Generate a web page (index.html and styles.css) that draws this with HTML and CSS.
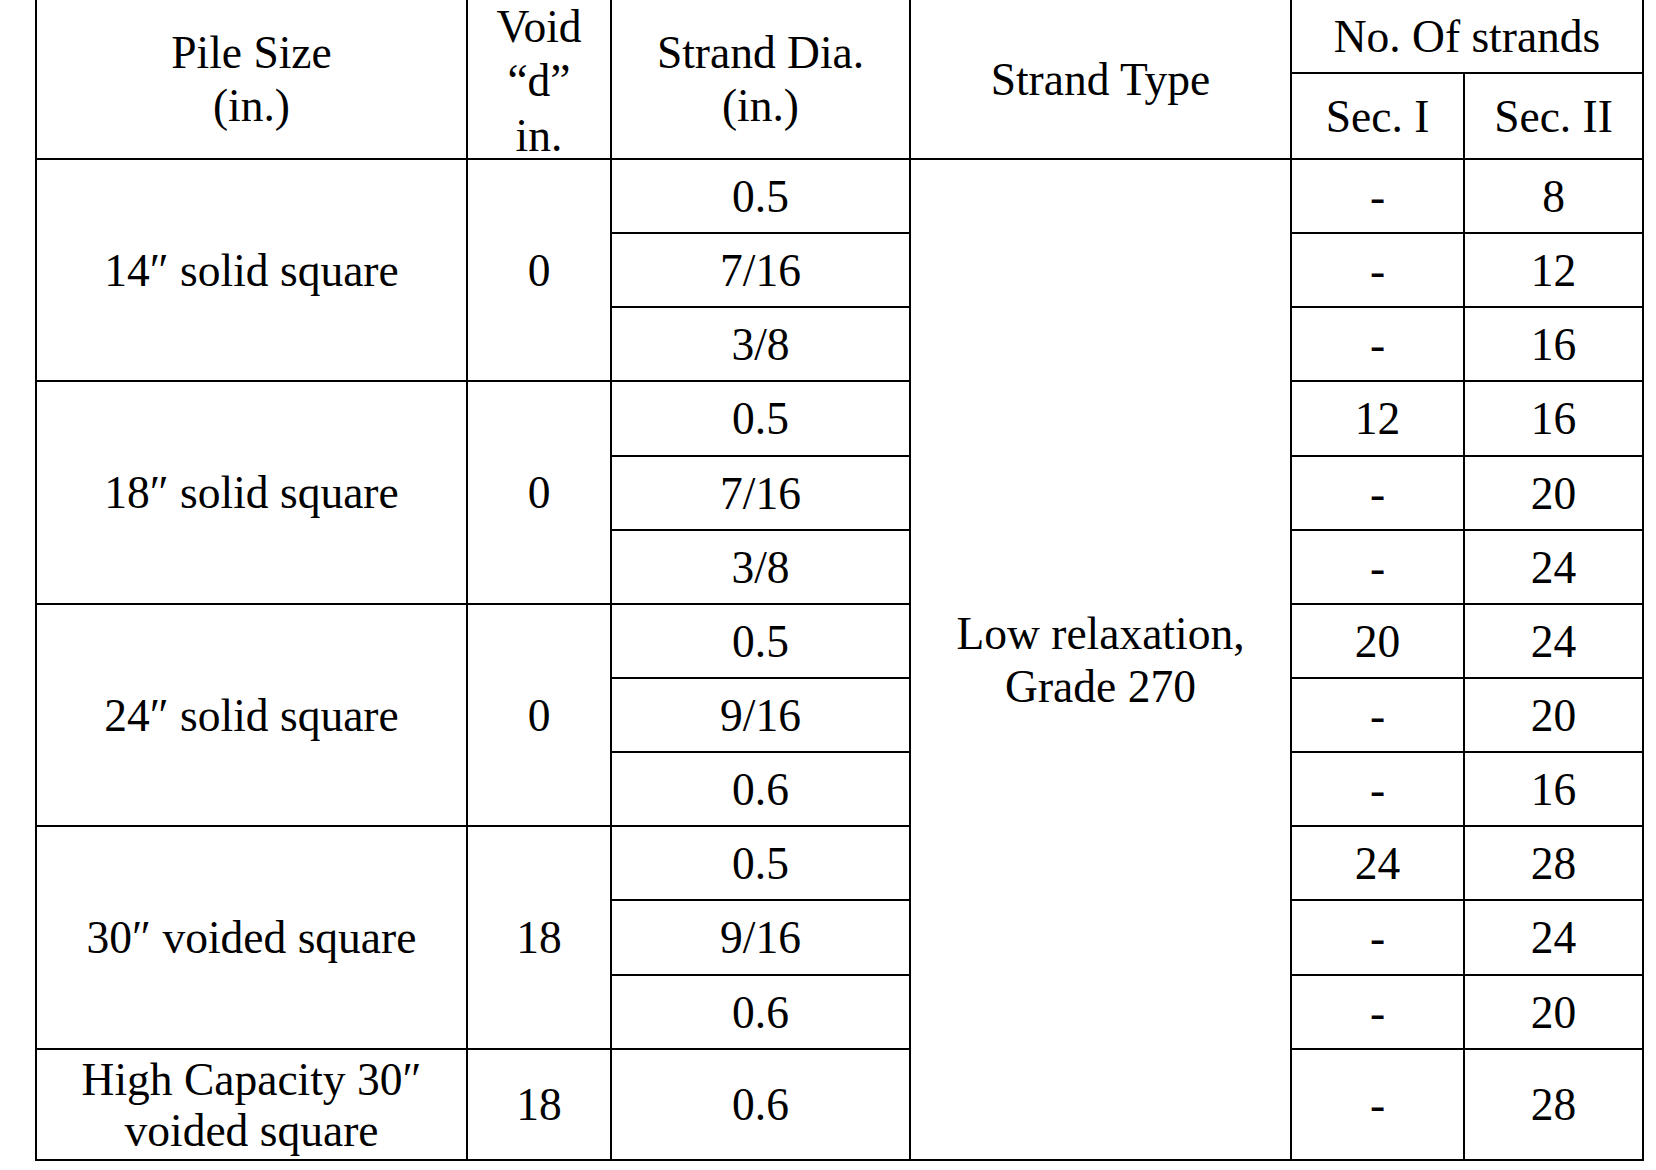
FILE: index.html
```html
<!DOCTYPE html>
<html lang="en">
<head>
<meta charset="utf-8">
<title>Strand table</title>
<link rel="stylesheet" href="styles.css">
</head>
<body>
<table class="strands">
  <colgroup>
    <col class="c-size">
    <col class="c-void">
    <col class="c-dia">
    <col class="c-type">
    <col class="c-sec1">
    <col class="c-sec2">
  </colgroup>
  <thead>
    <tr class="h1">
      <th rowspan="2">Pile Size<br>(in.)</th>
      <th rowspan="2" class="void-h"><div class="void-inner">Void<br>“d”<br>in.</div></th>
      <th rowspan="2">Strand Dia.<br>(in.)</th>
      <th rowspan="2">Strand Type</th>
      <th colspan="2">No. Of strands</th>
    </tr>
    <tr class="h2">
      <th>Sec. I</th>
      <th>Sec. II</th>
    </tr>
  </thead>
  <tbody>
    <tr class="r">
      <td rowspan="3">14″ solid square</td>
      <td rowspan="3">0</td>
      <td>0.5</td>
      <td rowspan="13" class="type">Low relaxation,<br>Grade 270</td>
      <td>-</td>
      <td>8</td>
    </tr>
    <tr class="r"><td>7/16</td><td>-</td><td>12</td></tr>
    <tr class="r"><td>3/8</td><td>-</td><td>16</td></tr>
    <tr class="r r75">
      <td rowspan="3">18″ solid square</td>
      <td rowspan="3">0</td>
      <td>0.5</td><td>12</td><td>16</td>
    </tr>
    <tr class="r"><td>7/16</td><td>-</td><td>20</td></tr>
    <tr class="r"><td>3/8</td><td>-</td><td>24</td></tr>
    <tr class="r">
      <td rowspan="3">24″ solid square</td>
      <td rowspan="3">0</td>
      <td>0.5</td><td>20</td><td>24</td>
    </tr>
    <tr class="r"><td>9/16</td><td>-</td><td>20</td></tr>
    <tr class="r"><td>0.6</td><td>-</td><td>16</td></tr>
    <tr class="r">
      <td rowspan="3">30″ voided square</td>
      <td rowspan="3">18</td>
      <td>0.5</td><td>24</td><td>28</td>
    </tr>
    <tr class="r r75"><td>9/16</td><td>-</td><td>24</td></tr>
    <tr class="r"><td>0.6</td><td>-</td><td>20</td></tr>
    <tr class="r-last">
      <td class="hc">High Capacity 30″<br>voided square</td>
      <td>18</td>
      <td>0.6</td>
      <td>-</td>
      <td>28</td>
    </tr>
  </tbody>
</table>
</body>
</html>
```

FILE: styles.css
```css
html, body {
  margin: 0;
  padding: 0;
  background: #ffffff;
}

.strands {
  margin-left: 35px;
  border-collapse: collapse;
  table-layout: fixed;
  width: 1609px;
  font-family: "Liberation Serif", "Times New Roman", serif;
  font-size: 45.5px;
  line-height: 53px;
  color: #000;
}

.c-size { width: 431px; }
.c-void { width: 144px; }
.c-dia  { width: 299px; }
.c-type { width: 381px; }
.c-sec1 { width: 173px; }
.c-sec2 { width: 179px; }

.strands th,
.strands td {
  border: 2px solid #000;
  padding: 0;
  text-align: center;
  vertical-align: middle;
  font-weight: normal;
  white-space: nowrap;
}

.strands .h1 th {
  border-top-style: hidden;
}

.h1 { height: 73px; }
.h2 { height: 86px; }
.r { height: 74px; }
.r75 { height: 75px; }
.r-last { height: 111px; }

.void-h .void-inner {
  line-height: 54.5px;
  margin: -8px 0 0;
  height: 151px;
  overflow: visible;
}

.hc {
  line-height: 51px;
  padding-top: 3px;
}
```
